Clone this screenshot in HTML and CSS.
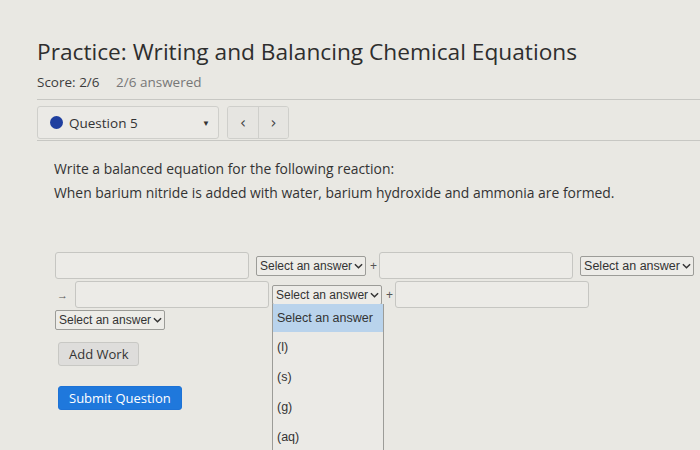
FILE: index.html
```html
<!DOCTYPE html>
<html lang="en">
<head>
    <meta charset="UTF-8">
    <title>Practice: Writing and Balancing Chemical Equations</title>
    <link rel="stylesheet" href="styles.css">
</head>
<body>
    <header class="page-head">
        <h1>Practice: Writing and Balancing Chemical Equations</h1>
        <div class="score">
            <span>Score: 2/6</span>
            <span class="answered">2/6 answered</span>
        </div>
        <div class="toolbar">
            <div class="question-picker">
                <span class="dot"></span>
                <span class="q-label">Question 5</span>
                <span class="caret">&#9660;</span>
            </div>
            <div class="nav">
                <button class="nav-btn">&lsaquo;</button>
                <button class="nav-btn">&rsaquo;</button>
            </div>
        </div>
    </header>

    <main class="question">
        <p>Write a balanced equation for the following reaction:</p>
        <p>When barium nitride is added with water, barium hydroxide and ammonia are formed.</p>

        <div class="equation">
            <div class="eq-row">
                <span class="field"></span>
                <span class="pick">Select an answer<svg viewBox="0 0 10 6"><path d="M1 1l4 4 4-4"/></svg></span>
                <span class="sign">+</span>
                <span class="field"></span>
                <span class="pick wide">Select an answer<svg viewBox="0 0 10 6"><path d="M1 1l4 4 4-4"/></svg></span>
            </div>
            <div class="eq-row second">
                <span class="arrow">&rarr;</span>
                <span class="field"></span>
                <span class="pick open">Select an answer<svg viewBox="0 0 10 6"><path d="M1 1l4 4 4-4"/></svg>
                    <ul class="options">
                        <li class="active">Select an answer</li>
                        <li>(l)</li>
                        <li>(s)</li>
                        <li>(g)</li>
                        <li>(aq)</li>
                    </ul>
                </span>
                <span class="sign">+</span>
                <span class="field"></span>
            </div>
            <div class="eq-row third">
                <span class="pick">Select an answer<svg viewBox="0 0 10 6"><path d="M1 1l4 4 4-4"/></svg></span>
            </div>
        </div>

        <div class="actions">
            <button class="btn">Add Work</button>
            <button class="btn primary">Submit Question</button>
        </div>
    </main>
</body>
</html>
```

FILE: styles.css
```css
body {
    margin: 0;
    width: 700px;
    height: 450px;
    overflow: hidden;
    background-color: #e9e8e3;
    font-family: "Open Sans", sans-serif;
    color: #333;
}
.page-head {
    padding: 36px 0 0 37px;
}
h1 {
    margin: 0;
    font-size: 22.7px;
    font-weight: 400;
    line-height: 32px;
    color: #2e2e2e;
}
.score {
    margin-top: 4px;
    font-size: 13.5px;
    line-height: 20px;
    color: #3c3c3c;
}
.answered {
    margin-left: 13px;
    color: #777;
}
.toolbar {
    margin-top: 7px;
    padding: 6px 0 1px 0;
    border-top: 1px solid #c7c7c3;
    border-bottom: 1px solid #c7c7c3;
    display: flex;
    gap: 8px;
}
.question-picker {
    width: 182px;
    height: 33px;
    border: 1px solid #cfcfcb;
    border-radius: 3px;
    background-color: #ebeae6;
    display: flex;
    align-items: center;
    padding: 0 0 0 12px;
    box-sizing: border-box;
}
.dot {
    width: 13px;
    height: 13px;
    border-radius: 50%;
    background-color: #1f3f9f;
}
.q-label {
    margin-left: 6px;
    font-size: 13.5px;
    flex: 1;
}
.caret {
    font-size: 8px;
    color: #333;
    margin-right: 8px;
}
.nav {
    display: flex;
    height: 33px;
    border: 1px solid #cfcfcb;
    border-radius: 3px;
    box-sizing: border-box;
    overflow: hidden;
}
.nav-btn {
    width: 30px;
    border: none;
    background-color: #e6e5e1;
    font-family: "DejaVu Sans", sans-serif;
    font-size: 15px;
    color: #444;
    padding: 0;
}
.nav-btn + .nav-btn {
    border-left: 1px solid #cfcfcb;
}
.question {
    padding: 0 0 0 54px;
    font-size: 13.9px;
    color: #333;
}
.question p {
    margin: 0;
    line-height: 24px;
}
.question p:first-child {
    margin-top: 16px;
}
.equation {
    margin-top: 47px;
    font-family: "Liberation Sans", Arial, sans-serif;
}
.eq-row {
    display: flex;
    align-items: center;
    gap: 4px;
    margin-left: 1px;
}
.eq-row.second {
    margin-top: 2px;
    margin-left: 3px;
}
.eq-row.third {
    margin-top: 2px;
    margin-left: 1px;
}
.field {
    width: 194px;
    height: 27px;
    border: 1px solid #c6c6c2;
    border-radius: 3px;
    background-color: #ecebe7;
    box-sizing: border-box;
}
.eq-row .field + .pick {
    margin-left: 3px;
}
.eq-row.second .field + .pick {
    margin-left: -1px;
}
.sign + .field {
    margin-left: -2px;
}
.pick {
    position: relative;
    display: inline-flex;
    align-items: center;
    height: 18px;
    padding: 0 2px 0 3px;
    border: 1px solid #9c9c98;
    border-radius: 2px;
    background-color: #edece8;
    font-size: 12px;
    color: #333;
    white-space: nowrap;
}
.pick.wide {
    font-size: 12.5px;
}
.pick svg {
    width: 9px;
    height: 6px;
    margin-left: 2px;
    fill: none;
    stroke: #333;
    stroke-width: 1.6;
}
.sign {
    font-size: 12px;
    color: #555;
}
.arrow {
    font-size: 11px;
    color: #555;
    margin-right: 3px;
}
.options {
    position: absolute;
    top: 18px;
    left: -1px;
    width: 110px;
    margin: 0;
    padding: 0;
    list-style: none;
    border: 1px solid #9c9c98;
    border-top: none;
    background-color: #ebeae6;
    font-size: 12.5px;
}
.options li {
    height: 30px;
    line-height: 30px;
    padding-left: 4px;
}
.options li.active {
    height: 28px;
    line-height: 28px;
    background-color: #b9d3ec;
}
.actions {
    display: flex;
    flex-direction: column;
    align-items: flex-start;
    gap: 20px;
    margin-top: 12px;
    margin-left: 4px;
}
.btn {
    height: 24px;
    padding: 0 10px;
    border: 1px solid #c8c8c4;
    border-radius: 3px;
    background-color: #dedddb;
    font-family: "Open Sans", sans-serif;
    font-size: 13px;
    color: #333;
}
.btn.primary {
    border-color: #1d72d6;
    background-color: #1f78dc;
    color: #fff;
}
```
